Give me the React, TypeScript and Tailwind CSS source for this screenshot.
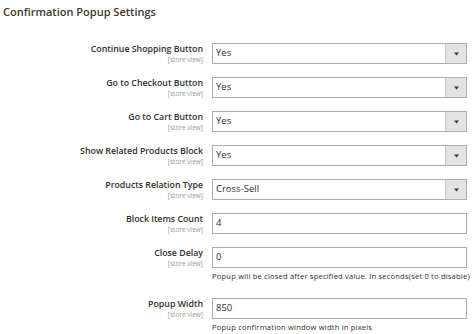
type Row = {
  label: string;
  value: string;
  kind: 'select' | 'text';
  note?: string;
};

const rows: Row[] = [
  { label: 'Continue Shopping Button', value: 'Yes', kind: 'select' },
  { label: 'Go to Checkout Button', value: 'Yes', kind: 'select' },
  { label: 'Go to Cart Button', value: 'Yes', kind: 'select' },
  { label: 'Show Related Products Block', value: 'Yes', kind: 'select' },
  { label: 'Products Relation Type', value: 'Cross-Sell', kind: 'select' },
  { label: 'Block Items Count', value: '4', kind: 'text' },
  {
    label: 'Close Delay',
    value: '0',
    kind: 'text',
    note: 'Popup will be closed after specified value. In seconds(set 0 to disable)',
  },
  { label: 'Popup Width', value: '850', kind: 'text', note: 'Popup confirmation window width in pixels' },
];

function Field({ row }: { row: Row }) {
  return (
    <div className="flex h-[21px] border border-[#adadad] bg-white">
      <div className="flex flex-1 items-center pl-[3px] text-[9.5px] text-[#303030]">{row.value}</div>
      {row.kind === 'select' && (
        <div className="flex w-[21px] items-center justify-center border-l border-[#c9c9c9] bg-[#e3e3e3]">
          <svg width="5" height="4" viewBox="0 0 5 4">
            <path d="M0 0.5h5L2.5 3.5z" fill="#333" />
          </svg>
        </div>
      )}
    </div>
  );
}

export default function App() {
  return (
    <div className="h-[334px] w-[474px] overflow-hidden bg-white font-['Open_Sans',sans-serif] text-[#303030]">
      <h2 className="pl-[3px] pt-[4px] text-[11px] font-semibold leading-[15px] text-[#41362f]">
        Confirmation Popup Settings
      </h2>
      <div className="mt-[24px] flex flex-col gap-[13px] pr-[7px]">
        {rows.map((row) => (
          <div key={row.label} className="flex gap-[9px]">
            <div className="flex w-[203px] shrink-0 flex-col items-end">
              <span className="text-[8.8px] font-semibold leading-[12px]">{row.label}</span>
              <span className="text-[6.5px] leading-[9px] text-[#999]">[store view]</span>
            </div>
            <div className="flex min-w-0 flex-1 flex-col">
              <Field row={row} />
              {row.note && (
                <div className="mt-[3px] h-[14px] whitespace-nowrap text-[7.6px] leading-[11px] tracking-[0.18px] text-[#303030]">
                  {row.note}
                </div>
              )}
            </div>
          </div>
        ))}
      </div>
    </div>
  );
}
